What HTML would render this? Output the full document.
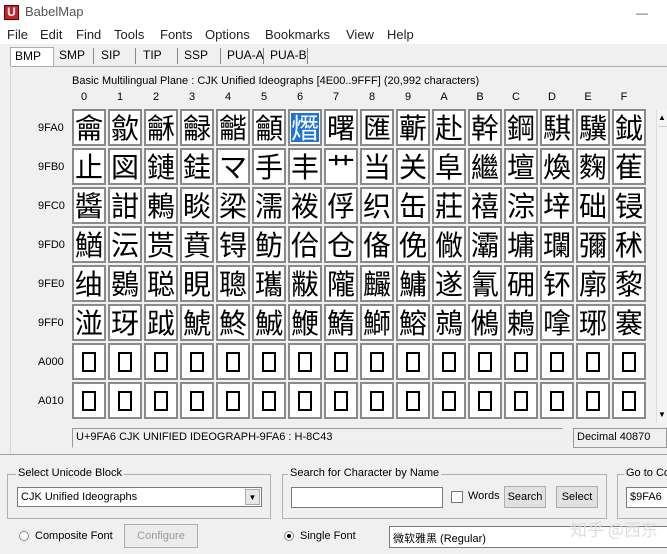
<!DOCTYPE html>
<html><head><meta charset="utf-8"><style>
*{margin:0;padding:0;box-sizing:border-box}
body{width:667px;height:554px;overflow:hidden;background:#f0f0f0;font-family:"Liberation Sans","Noto Sans CJK SC",sans-serif;font-size:11px;color:#000;position:relative}
.a{position:absolute;white-space:nowrap}
#title{left:0;top:0;width:667px;height:26px;background:#fff}
#menu{left:0;top:26px;width:667px;height:18px;background:#fff;font-size:13px;color:#222}
.tab{position:absolute;top:48px;height:16px;font-size:12px;border-right:1px solid #888;padding-left:5px;white-space:nowrap}
.c{position:absolute;width:34px;height:37px;border:2px solid #8a8a8a;background:#fff;font-family:"Noto Sans CJK SC",sans-serif;font-size:28px;line-height:33px;text-align:center;overflow:hidden}
.c.s{color:#fff}
.c.s span{background:#1e73d6;display:inline-block;line-height:29px;margin-top:2px}
.box{display:inline-block;width:14px;height:20px;border:2.5px solid #000;margin-top:7px}
.hx{position:absolute;top:91px;width:36px;text-align:center;font-size:11px}
.rl{position:absolute;left:38px;font-size:11px}
.grp{position:absolute;border:1px solid #b0b0b0;}
.lab{position:absolute;background:#f0f0f0;font-size:11px;padding:0 2px;white-space:nowrap}
.inp{position:absolute;background:#fff;border:1px solid #7a7a7a;font-size:11px;padding:3px 3px;white-space:nowrap;overflow:hidden}
.btn{position:absolute;background:#e1e1e1;border:1px solid #adadad;font-size:11px;text-align:center}
</style></head><body>
<div class="a" id="title"></div>
<div class="a" style="left:4px;top:5px;width:15px;height:15px;background:#c4262e;border:1px solid #600;color:#fff;font-weight:bold;font-size:12px;text-align:center;line-height:13px">U</div>
<div class="a" style="left:25px;top:4px;font-size:13px;color:#555">BabelMap</div>
<div class="a" style="left:636px;top:6px;font-size:12px;color:#555">—</div>
<div class="a" id="menu"><span class="a" style="left:7px;top:1px">File</span><span class="a" style="left:40px;top:1px">Edit</span><span class="a" style="left:76px;top:1px">Find</span><span class="a" style="left:114px;top:1px">Tools</span><span class="a" style="left:160px;top:1px">Fonts</span><span class="a" style="left:205px;top:1px">Options</span><span class="a" style="left:265px;top:1px">Bookmarks</span><span class="a" style="left:346px;top:1px">View</span><span class="a" style="left:387px;top:1px">Help</span></div>
<div class="a" style="left:10px;top:47px;width:44px;height:20px;background:#fff;border:1px solid #adadad;border-bottom:none"></div>
<div class="a" style="left:15px;top:49px;font-size:12px">BMP</div>
<div class="tab" style="left:54px;width:40px">SMP</div>
<div class="tab" style="left:96px;width:40px">SIP</div>
<div class="tab" style="left:138px;width:40px">TIP</div>
<div class="tab" style="left:179px;width:42px">SSP</div>
<div class="tab" style="left:222px;width:42px">PUA-A</div>
<div class="tab" style="left:265px;width:43px">PUA-B</div>
<div class="a" style="left:10px;top:66px;width:657px;height:1px;background:#adadad"></div>
<div class="a" style="left:10px;top:66px;width:1px;height:388px;background:#d8d8d8"></div>
<div class="a" style="left:0;top:454px;width:667px;height:1px;background:#a0a0a0"></div>
<div class="a" style="left:72px;top:75px;font-size:11px">Basic Multilingual Plane : CJK Unified Ideographs [4E00..9FFF] (20,992 characters)</div>
<div class="hx" style="left:66px">0</div><div class="hx" style="left:102px">1</div><div class="hx" style="left:138px">2</div><div class="hx" style="left:174px">3</div><div class="hx" style="left:210px">4</div><div class="hx" style="left:246px">5</div><div class="hx" style="left:282px">6</div><div class="hx" style="left:318px">7</div><div class="hx" style="left:354px">8</div><div class="hx" style="left:390px">9</div><div class="hx" style="left:426px">A</div><div class="hx" style="left:462px">B</div><div class="hx" style="left:498px">C</div><div class="hx" style="left:534px">D</div><div class="hx" style="left:570px">E</div><div class="hx" style="left:606px">F</div>
<div class="rl" style="top:122px">9FA0</div><div class="rl" style="top:161px">9FB0</div><div class="rl" style="top:200px">9FC0</div><div class="rl" style="top:239px">9FD0</div><div class="rl" style="top:278px">9FE0</div><div class="rl" style="top:317px">9FF0</div><div class="rl" style="top:356px">A000</div><div class="rl" style="top:395px">A010</div>

<div class="c" style="left:72px;top:109px">龠</div><div class="c" style="left:108px;top:109px">歙</div><div class="c" style="left:144px;top:109px">龢</div><div class="c" style="left:180px;top:109px">龣</div><div class="c" style="left:216px;top:109px">龤</div><div class="c" style="left:252px;top:109px">龥</div><div class="c s" style="left:288px;top:109px"><span>熸</span></div><div class="c" style="left:324px;top:109px">曙</div><div class="c" style="left:360px;top:109px">匯</div><div class="c" style="left:396px;top:109px">蘄</div><div class="c" style="left:432px;top:109px">赴</div><div class="c" style="left:468px;top:109px">幹</div><div class="c" style="left:504px;top:109px">鋼</div><div class="c" style="left:540px;top:109px">騏</div><div class="c" style="left:576px;top:109px">驥</div><div class="c" style="left:612px;top:109px">鉞</div>

<div class="c" style="left:72px;top:148px">止</div><div class="c" style="left:108px;top:148px">図</div><div class="c" style="left:144px;top:148px">鏈</div><div class="c" style="left:180px;top:148px">銈</div><div class="c" style="left:216px;top:148px">マ</div><div class="c" style="left:252px;top:148px">手</div><div class="c" style="left:288px;top:148px">丰</div><div class="c" style="left:324px;top:148px">艹</div><div class="c" style="left:360px;top:148px">当</div><div class="c" style="left:396px;top:148px">关</div><div class="c" style="left:432px;top:148px">阜</div><div class="c" style="left:468px;top:148px">繼</div><div class="c" style="left:504px;top:148px">壇</div><div class="c" style="left:540px;top:148px">煥</div><div class="c" style="left:576px;top:148px">麴</div><div class="c" style="left:612px;top:148px">萑</div>

<div class="c" style="left:72px;top:187px">醬</div><div class="c" style="left:108px;top:187px">詌</div><div class="c" style="left:144px;top:187px">鶇</div><div class="c" style="left:180px;top:187px">睒</div><div class="c" style="left:216px;top:187px">梁</div><div class="c" style="left:252px;top:187px">濡</div><div class="c" style="left:288px;top:187px">袯</div><div class="c" style="left:324px;top:187px">俘</div><div class="c" style="left:360px;top:187px">织</div><div class="c" style="left:396px;top:187px">缶</div><div class="c" style="left:432px;top:187px">莊</div><div class="c" style="left:468px;top:187px">禧</div><div class="c" style="left:504px;top:187px">淙</div><div class="c" style="left:540px;top:187px">垶</div><div class="c" style="left:576px;top:187px">础</div><div class="c" style="left:612px;top:187px">锓</div>

<div class="c" style="left:72px;top:226px">鰌</div><div class="c" style="left:108px;top:226px">沄</div><div class="c" style="left:144px;top:226px">贳</div><div class="c" style="left:180px;top:226px">賁</div><div class="c" style="left:216px;top:226px">锝</div><div class="c" style="left:252px;top:226px">鲂</div><div class="c" style="left:288px;top:226px">佮</div><div class="c" style="left:324px;top:226px">仓</div><div class="c" style="left:360px;top:226px">俻</div><div class="c" style="left:396px;top:226px">俛</div><div class="c" style="left:432px;top:226px">僘</div><div class="c" style="left:468px;top:226px">灞</div><div class="c" style="left:504px;top:226px">墉</div><div class="c" style="left:540px;top:226px">瓓</div><div class="c" style="left:576px;top:226px">彌</div><div class="c" style="left:612px;top:226px">秫</div>

<div class="c" style="left:72px;top:265px">䌷</div><div class="c" style="left:108px;top:265px">鷃</div><div class="c" style="left:144px;top:265px">聪</div><div class="c" style="left:180px;top:265px">睍</div><div class="c" style="left:216px;top:265px">聰</div><div class="c" style="left:252px;top:265px">瓗</div><div class="c" style="left:288px;top:265px">黻</div><div class="c" style="left:324px;top:265px">隴</div><div class="c" style="left:360px;top:265px">麣</div><div class="c" style="left:396px;top:265px">鱅</div><div class="c" style="left:432px;top:265px">遂</div><div class="c" style="left:468px;top:265px">氰</div><div class="c" style="left:504px;top:265px">砽</div><div class="c" style="left:540px;top:265px">钚</div><div class="c" style="left:576px;top:265px">廓</div><div class="c" style="left:612px;top:265px">黎</div>

<div class="c" style="left:72px;top:304px">湴</div><div class="c" style="left:108px;top:304px">玡</div><div class="c" style="left:144px;top:304px">䟠</div><div class="c" style="left:180px;top:304px">鯱</div><div class="c" style="left:216px;top:304px">鮗</div><div class="c" style="left:252px;top:304px">鯎</div><div class="c" style="left:288px;top:304px">鯾</div><div class="c" style="left:324px;top:304px">鰖</div><div class="c" style="left:360px;top:304px">鰤</div><div class="c" style="left:396px;top:304px">鰫</div><div class="c" style="left:432px;top:304px">鶁</div><div class="c" style="left:468px;top:304px">鵂</div><div class="c" style="left:504px;top:304px">鵣</div><div class="c" style="left:540px;top:304px">嗱</div><div class="c" style="left:576px;top:304px">琊</div><div class="c" style="left:612px;top:304px">褰</div>

<div class="c" style="left:72px;top:343px"><i class="box"></i></div><div class="c" style="left:108px;top:343px"><i class="box"></i></div><div class="c" style="left:144px;top:343px"><i class="box"></i></div><div class="c" style="left:180px;top:343px"><i class="box"></i></div><div class="c" style="left:216px;top:343px"><i class="box"></i></div><div class="c" style="left:252px;top:343px"><i class="box"></i></div><div class="c" style="left:288px;top:343px"><i class="box"></i></div><div class="c" style="left:324px;top:343px"><i class="box"></i></div><div class="c" style="left:360px;top:343px"><i class="box"></i></div><div class="c" style="left:396px;top:343px"><i class="box"></i></div><div class="c" style="left:432px;top:343px"><i class="box"></i></div><div class="c" style="left:468px;top:343px"><i class="box"></i></div><div class="c" style="left:504px;top:343px"><i class="box"></i></div><div class="c" style="left:540px;top:343px"><i class="box"></i></div><div class="c" style="left:576px;top:343px"><i class="box"></i></div><div class="c" style="left:612px;top:343px"><i class="box"></i></div>

<div class="c" style="left:72px;top:382px"><i class="box"></i></div><div class="c" style="left:108px;top:382px"><i class="box"></i></div><div class="c" style="left:144px;top:382px"><i class="box"></i></div><div class="c" style="left:180px;top:382px"><i class="box"></i></div><div class="c" style="left:216px;top:382px"><i class="box"></i></div><div class="c" style="left:252px;top:382px"><i class="box"></i></div><div class="c" style="left:288px;top:382px"><i class="box"></i></div><div class="c" style="left:324px;top:382px"><i class="box"></i></div><div class="c" style="left:360px;top:382px"><i class="box"></i></div><div class="c" style="left:396px;top:382px"><i class="box"></i></div><div class="c" style="left:432px;top:382px"><i class="box"></i></div><div class="c" style="left:468px;top:382px"><i class="box"></i></div><div class="c" style="left:504px;top:382px"><i class="box"></i></div><div class="c" style="left:540px;top:382px"><i class="box"></i></div><div class="c" style="left:576px;top:382px"><i class="box"></i></div><div class="c" style="left:612px;top:382px"><i class="box"></i></div>

<div class="a" style="left:656px;top:110px;width:11px;height:313px;background:#f4f4f4;border-left:1px solid #ddd"></div>
<div class="a" style="left:658px;top:113px;font-size:8px">▲</div>
<div class="a" style="left:658px;top:410px;font-size:8px">▼</div>
<div class="a" style="left:658px;top:126px;width:9px;height:180px;border-top:1px solid #ccc"></div>

<div class="a" style="left:72px;top:428px;width:491px;height:20px;border:1px solid #999;border-right-color:#eee;border-bottom-color:#eee;padding:2px 3px;font-size:11px">U+9FA6 CJK UNIFIED IDEOGRAPH-9FA6 : H-8C43</div>
<div class="a" style="left:573px;top:428px;width:94px;height:20px;border:1px solid #999;padding:2px 3px;font-size:11px">Decimal 40870</div>

<div class="grp" style="left:7px;top:474px;width:264px;height:45px"></div>
<div class="lab" style="left:16px;top:467px">Select Unicode Block</div>
<div class="inp" style="left:17px;top:487px;width:245px;height:20px">CJK Unified Ideographs</div>
<div class="a" style="left:245px;top:489px;width:15px;height:16px;background:#e8e8e8;border:1px solid #aaa;font-size:8px;text-align:center;line-height:15px">▼</div>

<div class="grp" style="left:282px;top:474px;width:325px;height:45px"></div>
<div class="lab" style="left:288px;top:467px">Search for Character by Name</div>
<div class="inp" style="left:291px;top:487px;width:152px;height:21px"></div>
<div class="a" style="left:451px;top:491px;width:12px;height:12px;background:#fff;border:1px solid #777"></div>
<div class="a" style="left:468px;top:490px">Words</div>
<div class="btn" style="left:504px;top:486px;width:42px;height:22px;line-height:20px">Search</div>
<div class="btn" style="left:556px;top:486px;width:42px;height:22px;line-height:20px">Select</div>

<div class="grp" style="left:617px;top:474px;width:60px;height:45px"></div>
<div class="lab" style="left:624px;top:467px">Go to Co</div>
<div class="inp" style="left:626px;top:487px;width:50px;height:21px">$9FA6</div>

<div class="a" style="left:19px;top:531px;width:10px;height:10px;border:1px solid #888;border-radius:50%;background:#fff"></div>
<div class="a" style="left:35px;top:530px">Composite Font</div>
<div class="btn" style="left:124px;top:524px;width:74px;height:24px;line-height:22px;color:#999;background:#ececec">Configure</div>
<div class="a" style="left:284px;top:531px;width:10px;height:10px;border:1px solid #888;border-radius:50%;background:#fff"></div>
<div class="a" style="left:287px;top:534px;width:4px;height:4px;border-radius:50%;background:#000"></div>
<div class="a" style="left:300px;top:530px">Single Font</div>
<div class="inp" style="left:389px;top:526px;width:290px;height:22px">微软雅黑 (Regular)</div>
<div class="a" style="left:570px;top:516px;font-size:17px;color:#ddd;font-family:'Noto Sans CJK SC',sans-serif">知乎 @西东</div>
</body></html>
